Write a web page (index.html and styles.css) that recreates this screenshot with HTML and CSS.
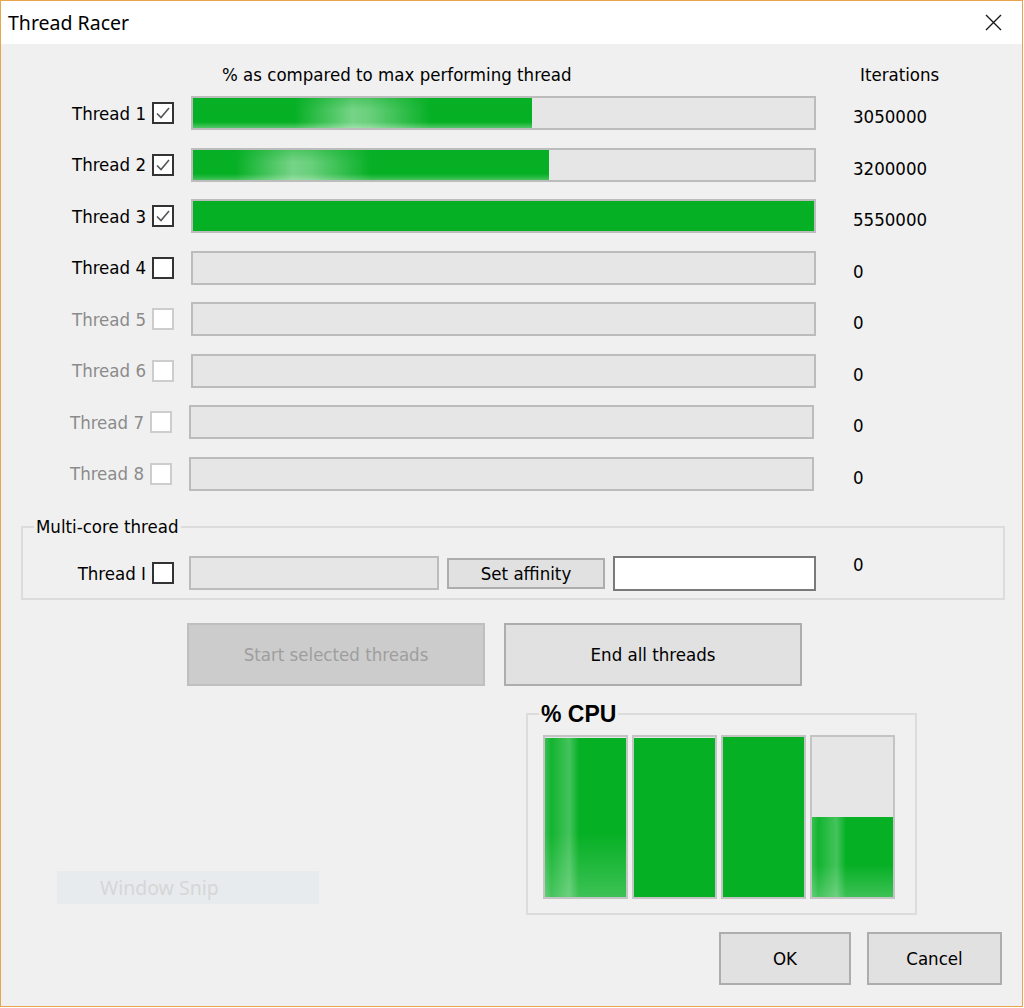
FILE: index.html
```html
<!DOCTYPE html>
<html lang="en">
<head>
    <meta charset="UTF-8">
    <title>Thread Racer</title>
    <link rel="stylesheet" href="styles.css">
</head>
<body>
    <div class="window">
        <div class="titlebar">
            <span class="title">Thread Racer</span>
            <svg class="close" width="17" height="17" viewBox="0 0 17 17">
                <path d="M1 1 L16 16 M16 1 L1 16" stroke="#1a1a1a" stroke-width="1.4" fill="none"/>
            </svg>
        </div>
        <div class="client">
            <div class="header">
                <span class="caption">% as compared to max performing thread</span>
                <span>Iterations</span>
            </div>
            <div class="threads">
                <div class="row">
                    <span class="label">Thread 1</span>
                    <span class="check"><svg viewBox="0 0 18 18"><path d="M3 9.5 L7 13.5 L15 4" stroke="#555" stroke-width="1.6" fill="none"/></svg></span>
                    <div class="bar"><div class="fill glow-mid" style="width: 54.6%"></div></div>
                    <span class="iter">3050000</span>
                </div>
                <div class="row">
                    <span class="label">Thread 2</span>
                    <span class="check"><svg viewBox="0 0 18 18"><path d="M3 9.5 L7 13.5 L15 4" stroke="#555" stroke-width="1.6" fill="none"/></svg></span>
                    <div class="bar"><div class="fill glow-left" style="width: 57.4%"></div></div>
                    <span class="iter">3200000</span>
                </div>
                <div class="row">
                    <span class="label">Thread 3</span>
                    <span class="check"><svg viewBox="0 0 18 18"><path d="M3 9.5 L7 13.5 L15 4" stroke="#555" stroke-width="1.6" fill="none"/></svg></span>
                    <div class="bar"><div class="fill" style="width: 100%"></div></div>
                    <span class="iter">5550000</span>
                </div>
                <div class="row">
                    <span class="label">Thread 4</span>
                    <span class="check"></span>
                    <div class="bar"></div>
                    <span class="iter">0</span>
                </div>
                <div class="row off">
                    <span class="label">Thread 5</span>
                    <span class="check"></span>
                    <div class="bar"></div>
                    <span class="iter">0</span>
                </div>
                <div class="row off">
                    <span class="label">Thread 6</span>
                    <span class="check"></span>
                    <div class="bar"></div>
                    <span class="iter">0</span>
                </div>
                <div class="row off nudge">
                    <span class="label">Thread 7</span>
                    <span class="check"></span>
                    <div class="bar"></div>
                    <span class="iter">0</span>
                </div>
                <div class="row off nudge">
                    <span class="label">Thread 8</span>
                    <span class="check"></span>
                    <div class="bar"></div>
                    <span class="iter">0</span>
                </div>
            </div>

            <fieldset class="group multicore">
                <legend>Multi-core thread</legend>
                <div class="mc-row">
                    <span class="label">Thread I</span>
                    <span class="check"></span>
                    <div class="bar short"></div>
                    <button class="btn affinity">Set affinity</button>
                    <input class="mask" type="text">
                    <span class="iter">0</span>
                </div>
            </fieldset>

            <div class="actions">
                <button class="btn big" disabled>Start selected threads</button>
                <button class="btn big">End all threads</button>
            </div>

            <div class="lower">
                <div class="snip">Window Snip</div>
                <fieldset class="group cpu">
                    <legend>% CPU</legend>
                    <div class="cores">
                        <div class="core"><div class="core-fill shine" style="height: 98.8%"></div></div>
                        <div class="core"><div class="core-fill" style="height: 98.8%"></div></div>
                        <div class="core"><div class="core-fill" style="height: 100%"></div></div>
                        <div class="core"><div class="core-fill shine" style="height: 50%"></div></div>
                    </div>
                </fieldset>
            </div>

            <div class="dialog-buttons">
                <button class="btn ok">OK</button>
                <button class="btn cancel">Cancel</button>
            </div>
        </div>
    </div>
</body>
</html>
```

FILE: styles.css
```css
* {
    box-sizing: border-box;
}
body {
    margin: 0;
    background-color: #fff;
    font-family: "DejaVu Sans Condensed", "Liberation Sans", sans-serif;
    font-size: 18.5px;
    color: #000;
}
.window {
    width: 1023px;
    height: 1007px;
    border: 1px solid #e8a54b;
    background-color: #f0f0f0;
    display: flex;
    flex-direction: column;
}
.titlebar {
    height: 43px;
    flex: none;
    background-color: #fff;
    display: flex;
    align-items: center;
    justify-content: space-between;
    padding: 0 20px 0 7px;
}
.title {
    font-family: "Noto Sans", "Open Sans", sans-serif;
    font-size: 19.5px;
}
.client {
    padding-top: 20px;
}
.header {
    display: flex;
    height: 22px;
    line-height: 22px;
    padding-left: 221px;
    margin-bottom: 10px;
}
.header .caption {
    width: 638px;
}
.threads {
    display: flex;
    flex-direction: column;
    gap: 17.5px;
}
.row {
    display: flex;
    align-items: center;
    height: 34px;
}
.row .label {
    width: 145px;
    margin-right: 6px;
    text-align: right;
}
.check {
    width: 22px;
    height: 22px;
    flex: none;
    border: 2px solid #333;
    background-color: #fff;
    margin-right: 17px;
}
.check svg {
    display: block;
    width: 18px;
    height: 18px;
}
.bar {
    width: 625px;
    height: 34px;
    flex: none;
    border: 2px solid #bcbcbc;
    background-color: #e6e6e6;
}
.fill {
    height: 100%;
    background-color: #06b025;
}
.fill.glow-mid {
    background:
        linear-gradient(to bottom, rgba(6,176,37,0.35), rgba(6,176,37,0) 40%, rgba(255,255,255,0) 80%, rgba(255,255,255,0.3)),
        linear-gradient(to right, rgba(255,255,255,0) 30%, rgba(255,255,255,0.45) 47%, rgba(255,255,255,0.4) 52%, rgba(255,255,255,0) 70%),
        #06b025;
}
.fill.glow-left {
    background:
        linear-gradient(to bottom, rgba(6,176,37,0.35), rgba(6,176,37,0) 40%, rgba(255,255,255,0) 80%, rgba(255,255,255,0.25)),
        linear-gradient(to right, rgba(255,255,255,0) 12%, rgba(255,255,255,0.45) 28%, rgba(255,255,255,0.4) 33%, rgba(255,255,255,0) 50%),
        #06b025;
}
.iter {
    margin-left: 37px;
    padding-top: 7px;
}
.row.off .label {
    color: #8b8b8b;
}
.row.off .check {
    border-color: #cdcdcd;
}
.row.nudge {
    margin-left: -2px;
}
.row.nudge .iter {
    margin-left: 39px;
}

.group {
    border: 2px solid #dcdcdc;
    margin: 0;
    padding: 0;
    min-width: 0;
}
.group legend {
    padding: 0 2px;
    margin-left: 11px;
    line-height: 22px;
}
.multicore {
    margin: 25px 0 0 20px;
    width: 984px;
    padding: 18px 0 7px 0;
}
.mc-row {
    display: flex;
    align-items: center;
    height: 35px;
}
.mc-row .label {
    width: 123px;
    margin-right: 6px;
    text-align: right;
}
.mc-row .check {
    margin-right: 15px;
}
.bar.short {
    width: 250px;
    margin-right: 8px;
}
.btn {
    font: inherit;
    color: #000;
    background-color: #e1e1e1;
    border: 2px solid #adadad;
    padding: 0;
}
.btn.affinity {
    width: 158px;
    height: 31px;
    margin-right: 8px;
}
.mask {
    width: 203px;
    height: 35px;
    border: 2px solid #7a7a7a;
    background-color: #fff;
    font: inherit;
}
.mc-row .iter {
    align-self: flex-start;
    padding-top: 0;
    margin-top: -2px;
    line-height: 22px;
}

.actions {
    display: flex;
    gap: 19px;
    margin: 23px 0 0 186px;
}
.btn.big {
    width: 298px;
    height: 63px;
}
.btn:disabled {
    background-color: #cccccc;
    border-color: #bfbfbf;
    color: #9e9e9e;
}

.lower {
    display: flex;
    align-items: flex-end;
    margin-top: 15px;
}
.snip {
    width: 262px;
    height: 33px;
    margin: 0 0 11px 56px;
    padding-left: 43px;
    background-color: #e7ebee;
    color: #d6d6d6;
    font-family: "Noto Sans", "Open Sans", sans-serif;
    font-size: 19.5px;
    line-height: 33px;
}
.cpu {
    width: 391px;
    margin-left: 207px;
    padding: 8px 0 14px 15px;
}
.cpu legend {
    margin-left: -4px;
    font-family: "Liberation Sans", sans-serif;
    font-weight: bold;
    font-size: 23px;
    line-height: 26px;
}
.cores {
    display: flex;
    gap: 4px;
}
.core {
    width: 85px;
    height: 164px;
    border: 2px solid #c4c4c4;
    background-color: #e6e6e6;
    display: flex;
    flex-direction: column;
    justify-content: flex-end;
}
.core-fill {
    background-color: #06b025;
}
.core-fill.shine {
    background:
        linear-gradient(to right, rgba(255,255,255,0.2), rgba(255,255,255,0.05) 8%, rgba(255,255,255,0.25) 30%, rgba(255,255,255,0) 42%),
        linear-gradient(to bottom, rgba(255,255,255,0) 60%, rgba(255,255,255,0.22)),
        #06b025;
}

.dialog-buttons {
    display: flex;
    justify-content: flex-end;
    gap: 16px;
    margin-top: 17px;
    padding-right: 20px;
}
.btn.ok {
    width: 132px;
    height: 53px;
}
.btn.cancel {
    width: 135px;
    height: 53px;
}
```
